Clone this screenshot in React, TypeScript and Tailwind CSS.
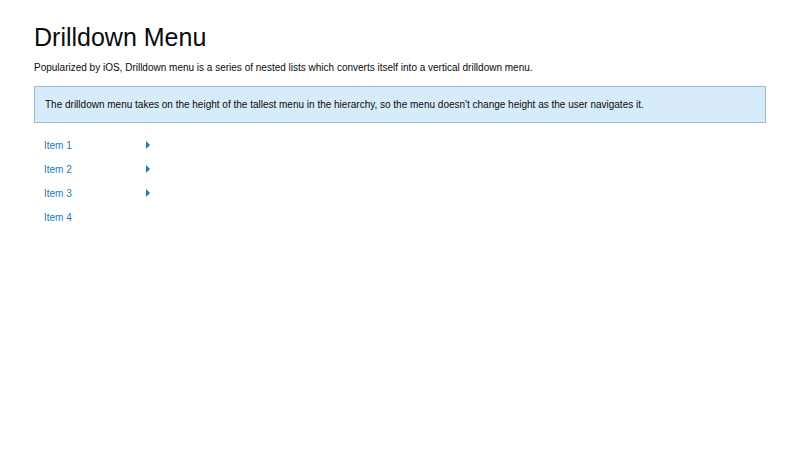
export default function App() {
  const items = [
    { label: 'Item 1', sub: true },
    { label: 'Item 2', sub: true },
    { label: 'Item 3', sub: true },
    { label: 'Item 4', sub: false },
  ]

  return (
    <div className="w-[800px] h-[450px] bg-white text-[#0a0a0a] font-['Liberation_Sans',Arial,sans-serif]">
      <div className="px-[34px] pt-[20px]">
        <h1 className="text-[25px] leading-[34px] font-normal">Drilldown Menu</h1>
        <p className="mt-[6px] text-[10px] leading-[16px]">
          Popularized by iOS, Drilldown menu is a series of nested lists which converts itself into a vertical drilldown menu.
        </p>

        {/* Callout */}
        <div className="mt-[10px] h-[37px] flex items-center px-[10px] bg-[#d7ecfa] border border-[#a6b8c5] text-[10px]">
          The drilldown menu takes on the height of the tallest menu in the hierarchy, so the menu doesn't change height as the user navigates it.
        </div>

        {/* Menu */}
        <ul className="mt-[10px] w-[120px]">
          {items.map((it) => (
            <li key={it.label}>
              <a className="flex items-center justify-between h-[24px] pl-[10px] pr-[4px] text-[10px] text-[#1779ba]">
                <span>{it.label}</span>
                {it.sub && (
                  <span className="block w-0 h-0 border-y-[4px] border-y-transparent border-l-[4px] border-l-[#1779ba]" />
                )}
              </a>
            </li>
          ))}
        </ul>
      </div>
    </div>
  )
}
